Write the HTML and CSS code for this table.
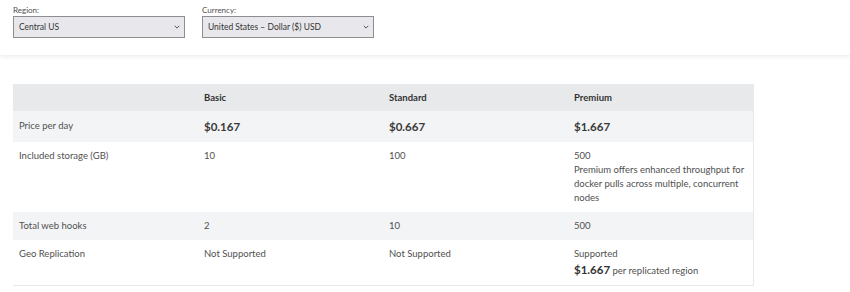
FILE: index.html
```html
<!DOCTYPE html>
<html lang="en">
<head>
<meta charset="utf-8">
<title>Pricing</title>
<link rel="stylesheet" href="styles.css">
</head>
<body>
<div class="filters">
  <div class="field">
    <label class="field-label" for="region">Region:</label>
    <div class="select">
      <span class="select-value">Central US</span>
      <svg class="chev" width="6" height="4" viewBox="0 0 6 4"><path d="M0.7 0.8l2.3 2.3 2.3-2.3" fill="none" stroke="#555" stroke-width="1"/></svg>
    </div>
  </div>
  <div class="field">
    <label class="field-label" for="currency">Currency:</label>
    <div class="select">
      <span class="select-value">United States – Dollar ($) USD</span>
      <svg class="chev" width="6" height="4" viewBox="0 0 6 4"><path d="M0.7 0.8l2.3 2.3 2.3-2.3" fill="none" stroke="#555" stroke-width="1"/></svg>
    </div>
  </div>
</div>
<div class="content">
  <table class="pricing">
    <thead>
      <tr><th></th><th>Basic</th><th>Standard</th><th>Premium</th></tr>
    </thead>
    <tbody>
      <tr class="shade price-row">
        <td>Price per day</td>
        <td><span class="price">$0.167</span></td>
        <td><span class="price">$0.667</span></td>
        <td><span class="price">$1.667</span></td>
      </tr>
      <tr>
        <td>Included storage (GB)</td>
        <td>10</td>
        <td>100</td>
        <td>500<br>Premium offers enhanced throughput for docker pulls across multiple, concurrent nodes</td>
      </tr>
      <tr class="shade">
        <td>Total web hooks</td>
        <td>2</td>
        <td>10</td>
        <td>500</td>
      </tr>
      <tr>
        <td>Geo Replication</td>
        <td>Not Supported</td>
        <td>Not Supported</td>
        <td>Supported<br><span class="price-inline">$1.667</span> per replicated region</td>
      </tr>
    </tbody>
  </table>
</div>
</body>
</html>
```
FILE: styles.css
```css
* { box-sizing: border-box; }
body {
  margin: 0;
  background: #fff;
  font-family: "Lato", "Open Sans", sans-serif;
  color: #505050;
}
.filters {
  display: flex;
  gap: 17px;
  padding: 5px 13px 0;
  height: 55px;
  box-shadow: 0 2px 4px rgba(0,0,0,0.07);
  position: relative;
}
.field {
  display: flex;
  flex-direction: column;
}
.field-label {
  font-size: 8px;
  line-height: 11px;
  color: #505050;
  height: 11px;
}
.select {
  width: 172px;
  height: 22px;
  background: #e8e8ec;
  border: 1px solid #8e8e8e;
  display: flex;
  align-items: center;
  justify-content: space-between;
  padding: 0 4px 0 5px;
  font-size: 8.5px;
  color: #333;
}
.chev { display: block; }
.content {
  padding: 29px 13px 0;
}
.pricing {
  border-collapse: collapse;
  width: 740px;
  table-layout: fixed;
  font-size: 9.5px;
  line-height: 14px;
  border-right: 1px solid #e8e9eb;
  border-bottom: 1px solid #e8e9eb;
}
.pricing th, .pricing td {
  width: 185px;
  text-align: left;
  vertical-align: top;
  padding: 7px 6px 7px 6px;
}
.pricing thead tr { background: #e8e9eb; }
.pricing th {
  font-weight: 700;
  color: #333;
  height: 27px;
  padding-top: 7px;
  padding-bottom: 6px;
}
.shade { background: #f3f4f6; }
.price-row td { height: 31px; padding-top: 8px; }
.price {
  font-size: 11.5px;
  font-weight: 700;
  color: #3a3a3a;
  line-height: 16px;
}
.price-inline {
  font-size: 11.5px;
  font-weight: 700;
  color: #333;
  line-height: 17px;
}
```
